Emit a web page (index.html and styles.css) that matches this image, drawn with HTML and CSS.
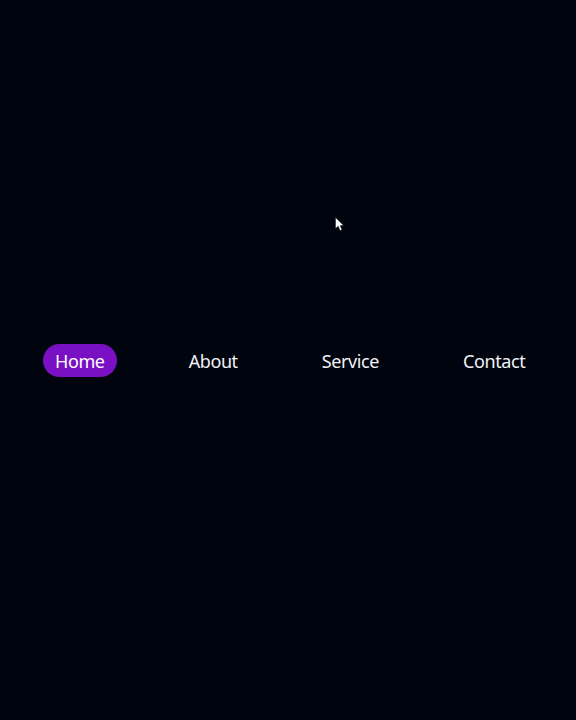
FILE: index.html
```html
<!DOCTYPE html>
<html lang="en">
<head>
<meta charset="utf-8">
<title>Navigation</title>
<link rel="stylesheet" href="styles.css">
</head>
<body>
<nav class="nav">
  <a class="nav-link is-active" href="#">Home</a>
  <a class="nav-link" href="#">About</a>
  <a class="nav-link" href="#">Service</a>
  <a class="nav-link" href="#">Contact</a>
</nav>
<svg class="cursor" width="10" height="15" viewBox="0 0 10 15" aria-hidden="true">
  <path d="M0.5 0.5V11.5L3.2 9.2L5 13.6L7 12.7L5.2 8.6H8.6Z" fill="#fff" stroke="#15151c" stroke-width="0.5"/>
</svg>
</body>
</html>
```
FILE: styles.css
```css
html, body {
  margin: 0;
  height: 100%;
}
body {
  position: relative;
  background: #00040f;
  display: flex;
  align-items: center;
  overflow: hidden;
  font-family: "Noto Sans", "Open Sans", sans-serif;
}
.nav {
  display: flex;
  align-items: center;
  gap: 60px;
  padding-left: 43px;
  padding-top: 1px;
}
.nav-link {
  display: block;
  padding: 0 12px;
  height: 33px;
  line-height: 35px;
  border-radius: 17px;
  color: #f2f2f5;
  font-size: 18px;
  letter-spacing: -0.4px;
  text-decoration: none;
  white-space: nowrap;
}
.is-active {
  background: #7a10c4;
  color: #fff;
}
.cursor {
  position: absolute;
  left: 335px;
  top: 217px;
}
```
